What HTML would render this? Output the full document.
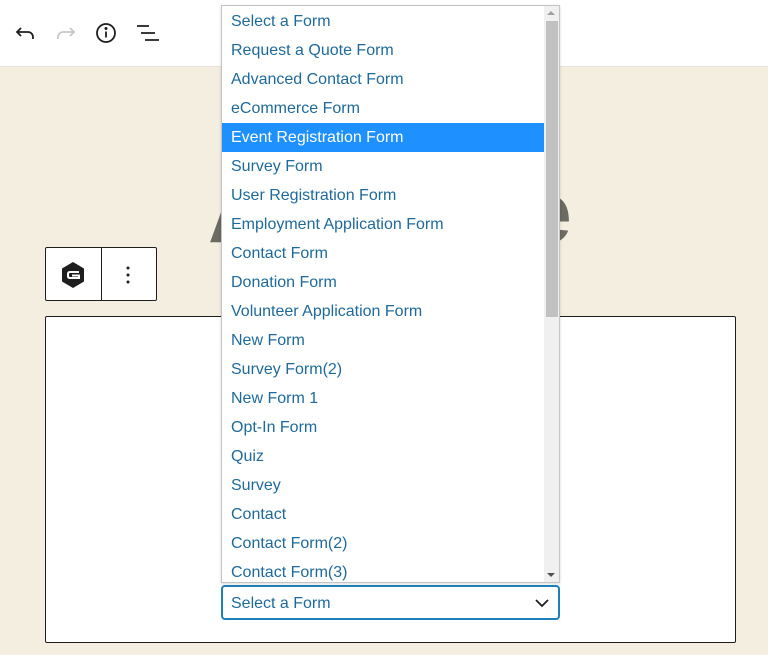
<!DOCTYPE html>
<html><head><style>
*{margin:0;padding:0;box-sizing:border-box}
body{width:768px;height:655px;overflow:hidden;background:#f4eee0;font-family:"Liberation Sans",sans-serif;position:relative}
.top{position:absolute;left:0;top:0;width:768px;height:67px;background:#fff;border-bottom:1px solid #e6e2d8}
.big{position:absolute;top:170px;font-size:86px;font-weight:bold;color:#6b6a63;line-height:86px}
.tb{position:absolute;left:45px;top:247px;width:112px;height:54px;background:#fff;border:1px solid #1e1e1e;border-radius:2px}
.tb .d{position:absolute;left:55px;top:0;width:1px;height:52px;background:#1e1e1e}
.box{position:absolute;left:45px;top:316px;width:691px;height:327px;background:#fff;border:1px solid #1e1e1e;border-radius:2px}
.sel{position:absolute;left:221px;top:585px;width:339px;height:35px;border:2px solid #1f7fbd;border-radius:4px;background:#fff;color:#1e6a9a;font-size:16px;padding:8px 0 0 8px}
.dd{position:absolute;left:221px;top:5px;width:339px;height:578px;background:#fff;border:1px solid #c4c4c4;overflow:hidden;padding-top:1px;box-shadow:0 1px 3px rgba(0,0,0,.15)}
.it{height:29px;line-height:29px;padding-left:9px;color:#1e6a9a;font-size:16px;width:322px;white-space:nowrap}
.hl{background:#1e90ff;color:#fff}
.sb{position:absolute;right:0;top:0;width:15px;height:576px;background:#f0f0f0}
.th{position:absolute;left:2px;top:15px;width:12px;height:296px;background:#c1c1c1}
</style></head><body>
<div class="top">
<svg style="position:absolute;left:14px;top:22px" width="22" height="22" viewBox="0 0 22 22" fill="none" stroke="#1e1e1e" stroke-width="1.8"><path d="M7 6 L3 10 L7 14 M3 10 H14 a5 5 0 0 1 5 5 v2"/></svg>
<svg style="position:absolute;left:55px;top:22px" width="22" height="22" viewBox="0 0 22 22" fill="none" stroke="#c8c8c8" stroke-width="1.8"><path d="M15 6 L19 10 L15 14 M19 10 H8 a5 5 0 0 0 -5 5 v2"/></svg>
<svg style="position:absolute;left:95px;top:22px" width="22" height="22" viewBox="0 0 22 22" fill="none" stroke="#1e1e1e" stroke-width="1.8"><circle cx="11" cy="11" r="9"/><path d="M11 9.5v6"/><circle cx="11" cy="6.5" r="0.6" fill="#1e1e1e"/></svg>
<svg style="position:absolute;left:136px;top:22px" width="24" height="22" viewBox="0 0 24 22" stroke="#1e1e1e" stroke-width="1.8"><path d="M1 4h12M5 11h14M9 18h14"/></svg>
</div>
<div class="big" style="left:208px">A</div>
<div class="big" style="left:524px">e</div>
<div class="tb"><svg style="position:absolute;left:14px;top:13px" width="26" height="28" viewBox="0 0 26 28"><path d="M13 1 L24 7.5 V20.5 L13 27 L2 20.5 V7.5Z" fill="#1e1e1e"/><path d="M19 11 H10 Q8 11 8 13 V15 Q8 17 10 17 H19 V14.5 H12" fill="none" stroke="#fff" stroke-width="2"/></svg><div class="d"></div>
<svg style="position:absolute;left:79px;top:17px" width="6" height="20"><circle cx="3" cy="3" r="1.5" fill="#1e1e1e"/><circle cx="3" cy="10" r="1.5" fill="#1e1e1e"/><circle cx="3" cy="17" r="1.5" fill="#1e1e1e"/></svg></div>
<div class="box"></div>
<div class="sel">Select a Form<svg style="position:absolute;right:9px;top:11px" width="14" height="10" viewBox="0 0 14 10" fill="none" stroke="#1e1e1e" stroke-width="1.8"><path d="M1 2l6 6 6-6"/></svg></div>
<div class="dd">
<div class="it">Select a Form</div><div class="it">Request a Quote Form</div><div class="it">Advanced Contact Form</div><div class="it">eCommerce Form</div><div class="it hl">Event Registration Form</div><div class="it">Survey Form</div><div class="it">User Registration Form</div><div class="it">Employment Application Form</div><div class="it">Contact Form</div><div class="it">Donation Form</div><div class="it">Volunteer Application Form</div><div class="it">New Form</div><div class="it">Survey Form(2)</div><div class="it">New Form 1</div><div class="it">Opt-In Form</div><div class="it">Quiz</div><div class="it">Survey</div><div class="it">Contact</div><div class="it">Contact Form(2)</div><div class="it">Contact Form(3)</div>
<div class="sb"><div class="th"></div>
<svg style="position:absolute;left:3px;top:4px" width="9" height="6"><path d="M0 5h8L4 1z" fill="#a0a0a0"/></svg>
<svg style="position:absolute;left:3px;top:566px" width="9" height="6"><path d="M0 1h8L4 5z" fill="#505050"/></svg></div>
</div>
</body></html>
